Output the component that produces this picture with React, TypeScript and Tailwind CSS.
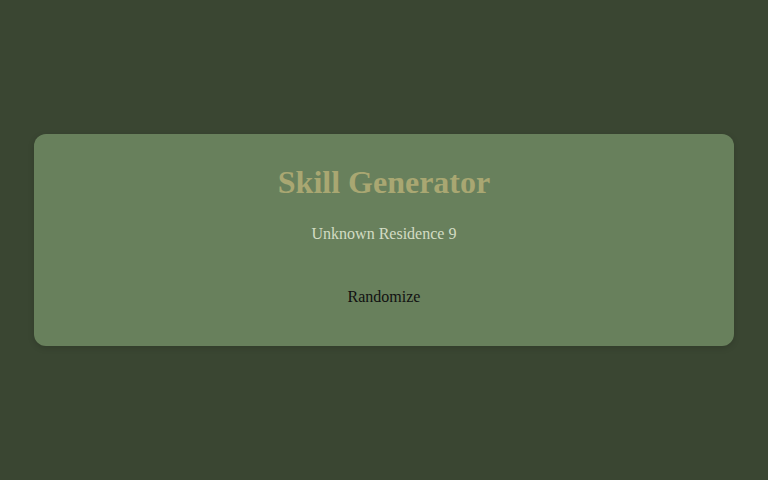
import { useState } from "react";

const places = ["Unknown Residence 9", "Abandoned Tower 3", "Hidden Grove 12", "Forgotten Keep 5"];

export default function App() {
  const [place, setPlace] = useState(places[0]);

  const randomize = () => {
    setPlace(places[Math.floor(Math.random() * places.length)]);
  };

  return (
    <div className="flex h-screen w-full items-center justify-center bg-[#3a4632] font-['Liberation_Serif',serif]">
      <section className="flex w-[700px] flex-col items-center rounded-xl bg-[#68805c] pb-[40px] pt-[30px] shadow-[0_2px_6px_rgba(0,0,0,0.15)]">
        <h1 className="text-[32px] font-bold leading-[37px] text-[#a9a772]">Skill Generator</h1>
        <p className="mt-[24px] text-base leading-[18px] text-[#d3dcc4]">{place}</p>
        <button
          type="button"
          onClick={randomize}
          className="mt-[45px] cursor-pointer bg-transparent text-base leading-[18px] text-[#111]"
        >
          Randomize
        </button>
      </section>
    </div>
  );
}
